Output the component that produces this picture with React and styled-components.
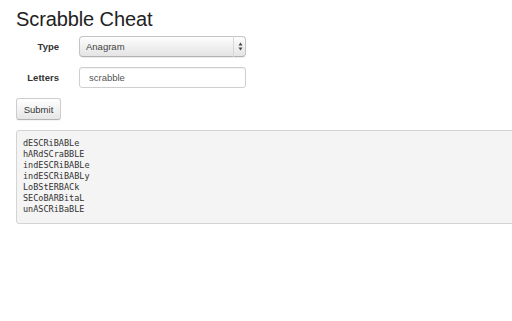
import React from 'react';
import styled, { createGlobalStyle } from 'styled-components';

const results = [
  'dESCRiBABLe',
  'hARdSCraBBLE',
  'indESCRiBABLe',
  'indESCRiBABLy',
  'LoBStERBACk',
  'SECoBARBitaL',
  'unASCRiBaBLE',
];

function App() {
  return (
    <>
      <GlobalStyle />
      <Page>
        <Title>Scrabble Cheat</Title>
        <Form onSubmit={(e) => e.preventDefault()}>
          <Row>
            <Label>Type</Label>
            <SelectWrap>
              <Select defaultValue='Anagram'>
                <option>Anagram</option>
              </Select>
              <Arrows>
                <svg width='5' height='9' viewBox='0 0 5 9'>
                  <path d='M2.5 0.5 L4.5 3.5 L0.5 3.5 Z' fill='#444' />
                  <path d='M2.5 8.5 L4.5 5.5 L0.5 5.5 Z' fill='#444' />
                </svg>
              </Arrows>
            </SelectWrap>
          </Row>
          <Row>
            <Label>Letters</Label>
            <Input defaultValue='scrabble' />
          </Row>
          <Button type='submit'>Submit</Button>
        </Form>
        <Results>{results.join('\n')}</Results>
      </Page>
    </>
  );
}

export default App;

const GlobalStyle = createGlobalStyle`
  body {
    margin: 0;
    background: #fff;
    overflow: hidden;
    font-family: 'Liberation Sans', Arial, sans-serif;
    color: #333;
  }
`;

const Page = styled.div`
  padding: 0 0 0 16px;
  width: 100%;
  box-sizing: border-box;
`;

const Title = styled.h1`
  margin: 0;
  padding-top: 7px;
  font-size: 20px;
  line-height: 24px;
  font-weight: normal;
  color: #222;
  letter-spacing: -0.1px;
`;

const Form = styled.form`
  display: flex;
  flex-direction: column;
  margin-top: 5px;
`;

const Row = styled.div`
  display: grid;
  grid-template-columns: 43px 167px;
  column-gap: 20px;
  align-items: center;
  margin-bottom: 10px;
`;

const Label = styled.label`
  text-align: right;
  font-size: 9.5px;
  font-weight: bold;
  color: #333;
`;

const SelectWrap = styled.div`
  position: relative;
  height: 21px;
`;

const Select = styled.select`
  appearance: none;
  -webkit-appearance: none;
  width: 100%;
  height: 21px;
  box-sizing: border-box;
  margin: 0;
  padding: 0 0 0 6px;
  font-family: 'Liberation Sans', Arial, sans-serif;
  font-size: 9.5px;
  color: #444;
  border: 1px solid #c4c4c4;
  border-bottom-color: #b0b0b0;
  border-radius: 4px;
  background: linear-gradient(#fdfdfd, #e4e4e4);
  box-shadow: 0 1px 1px rgba(0, 0, 0, 0.08);
  outline: none;
`;

const Arrows = styled.span`
  position: absolute;
  top: 0;
  right: 0;
  width: 12px;
  height: 21px;
  display: flex;
  align-items: center;
  justify-content: center;
  border-left: 1px solid #d6d6d6;
  pointer-events: none;
`;

const Input = styled.input`
  width: 100%;
  height: 21px;
  box-sizing: border-box;
  margin: 0;
  padding: 0 9px;
  font-family: 'Liberation Sans', Arial, sans-serif;
  font-size: 9.5px;
  color: #555;
  border: 1px solid #cfcfcf;
  border-radius: 3px;
  box-shadow: inset 0 1px 1px rgba(0, 0, 0, 0.06);
  outline: none;
`;

const Button = styled.button`
  align-self: flex-start;
  width: 45px;
  height: 22px;
  margin: 0;
  padding: 0;
  font-family: 'Liberation Sans', Arial, sans-serif;
  font-size: 9.5px;
  color: #333;
  border: 1px solid #cdcdcd;
  border-bottom-color: #b3b3b3;
  border-radius: 3px;
  background: linear-gradient(#fff, #e6e6e6);
  box-shadow: 0 1px 1px rgba(0, 0, 0, 0.05);
`;

const Results = styled.pre`
  width: 520px;
  box-sizing: border-box;
  height: 94px;
  margin: 10px 0 0;
  padding: 7px 6px;
  font-family: 'DejaVu Sans Mono', monospace;
  font-size: 8.5px;
  line-height: 11px;
  color: #333;
  background: #f4f4f4;
  border: 1px solid #d4d4d4;
  border-radius: 3px;
`;
